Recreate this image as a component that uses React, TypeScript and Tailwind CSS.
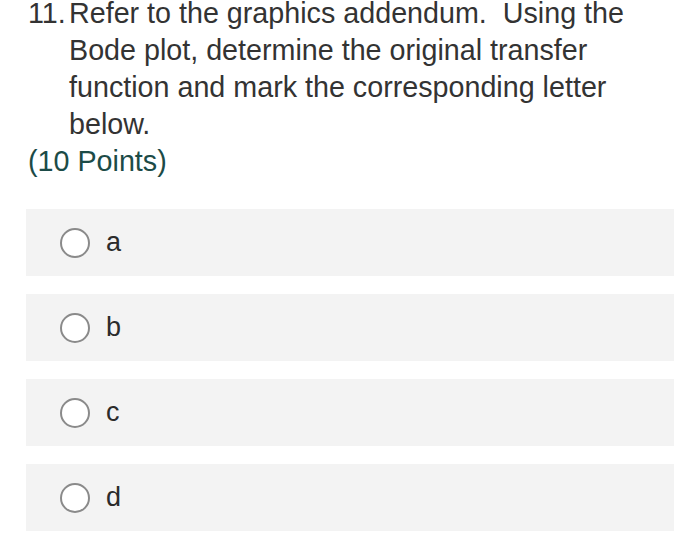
const options = ["a", "b", "c", "d"];

export default function App() {
  return (
    <div className="h-[550px] w-[700px] overflow-hidden bg-white font-['Liberation_Sans',Arial,sans-serif]">
      {/* Question */}
      <div className="-mt-[5px] pl-[28px] pr-[24px] text-[28.7px] leading-[37px] text-[#333333]">
        <div className="flex">
          <span className="w-[41px] shrink-0 whitespace-nowrap">11.</span>
          <p>
            Refer to the graphics addendum.&nbsp; Using the Bode plot, determine the original transfer function
            and mark the corresponding letter below.
          </p>
        </div>
        <div className="text-[#1c4b47]">(10 Points)</div>
      </div>

      {/* Choices */}
      <div className="mx-[26px] mt-[29px] flex flex-col gap-[18px]">
        {options.map((opt) => (
          <div key={opt} className="flex h-[67px] items-center gap-4 bg-[#f3f3f3] pl-[34px]">
            <span className="h-[30px] w-[30px] shrink-0 rounded-full border-[2.5px] border-[#8a8a8a] bg-white" />
            <span className="text-[27px] text-[#2b2b2b]">{opt}</span>
          </div>
        ))}
      </div>
    </div>
  );
}
